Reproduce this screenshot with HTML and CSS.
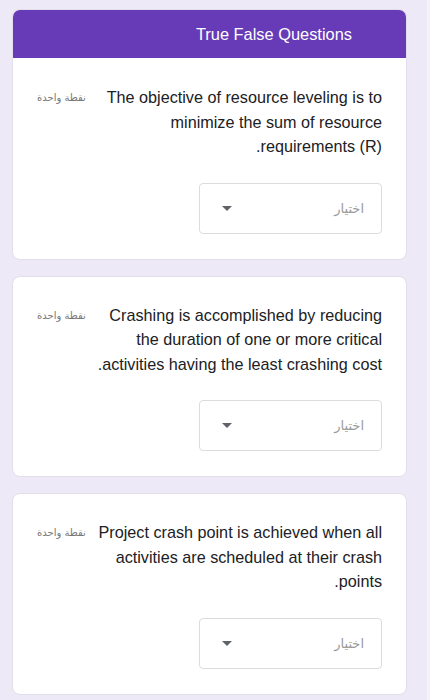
FILE: index.html
```html
<!DOCTYPE html>
<html lang="ar" dir="rtl">
<head>
    <meta charset="UTF-8">
    <meta name="viewport" content="width=device-width, initial-scale=1.0">
    <title>True False Questions</title>
    <link rel="stylesheet" href="styles.css">
</head>
<body>
    <div class="form">
        <div class="card first">
            <div class="form-header">
                <h1 dir="ltr">True False Questions</h1>
            </div>
            <div class="question">
                <div class="question-row">
                    <div class="question-title">The objective of resource leveling is to minimize the sum of resource requirements (R).</div>
                    <span class="points">نقطة واحدة</span>
                </div>
                <div class="select">
                    <span class="select-text">اختيار</span>
                    <span class="arrow"></span>
                </div>
            </div>
        </div>

        <div class="card">
            <div class="question">
                <div class="question-row">
                    <div class="question-title">Crashing is accomplished by reducing the duration of one or more critical activities having the least crashing cost.</div>
                    <span class="points">نقطة واحدة</span>
                </div>
                <div class="select">
                    <span class="select-text">اختيار</span>
                    <span class="arrow"></span>
                </div>
            </div>
        </div>

        <div class="card">
            <div class="question">
                <div class="question-row">
                    <div class="question-title">Project crash point is achieved when all activities are scheduled at their crash points.</div>
                    <span class="points">نقطة واحدة</span>
                </div>
                <div class="select">
                    <span class="select-text">اختيار</span>
                    <span class="arrow"></span>
                </div>
            </div>
        </div>
    </div>
</body>
</html>
```

FILE: styles.css
```css
* {
    margin: 0;
    padding: 0;
    box-sizing: border-box;
    font-family: 'Liberation Sans', Arial, 'DejaVu Sans', sans-serif;
}

body {
    background-color: #ede9f7;
    width: 430px;
    min-height: 100vh;
    border-right: 3px solid #f3f1f9;
}

.form {
    display: flex;
    flex-direction: column;
    gap: 16px;
    padding: 9px 20px 0 12px;
}

.card {
    background-color: #fff;
    border: 1px solid #e2dfea;
    border-radius: 8px;
    overflow: hidden;
}

.form-header {
    background-color: #673ab7;
    height: 48px;
    display: flex;
    align-items: center;
    justify-content: flex-start;
    padding-right: 54px;
}

.form-header h1 {
    color: #fff;
    font-size: 16.4px;
    font-weight: normal;
}

.question {
    padding: 26px 24px 25px 24px;
}

.first .question {
    padding-top: 27px;
    padding-bottom: 25px;
}

.question-row {
    display: flex;
    align-items: flex-start;
    gap: 5px;
}

.question-title {
    flex: 1;
    font-size: 16.2px;
    line-height: 24.5px;
    color: #202124;
    text-align: right;
}

.points {
    flex-shrink: 0;
    font-family: 'DejaVu Sans', sans-serif;
    font-size: 10px;
    color: #777;
    line-height: 26px;
}

.select {
    margin-top: 24px;
    width: 183px;
    height: 51px;
    border: 1px solid #dadce0;
    border-radius: 4px;
    display: flex;
    align-items: center;
    justify-content: space-between;
    padding: 0 17px 0 22px;
}

.select-text {
    font-family: 'DejaVu Sans', sans-serif;
    font-size: 13px;
    color: #9a9a9a;
}

.arrow {
    width: 0;
    height: 0;
    border-left: 5px solid transparent;
    border-right: 5px solid transparent;
    border-top: 5px solid #5f6368;
}
```
